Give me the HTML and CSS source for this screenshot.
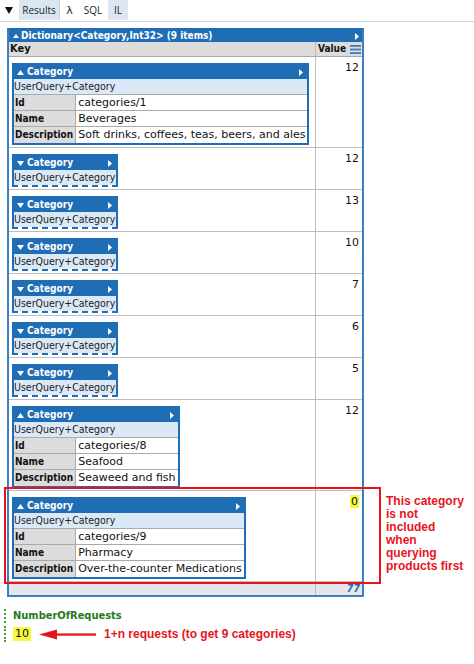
FILE: index.html
```html
<!DOCTYPE html>
<html>
<head>
<meta charset="utf-8">
<link rel="stylesheet" href="styles.css">
</head>
<body>
<div class="page">
  <div class="toolbar">
    <span class="drop"><svg width="8" height="7" viewBox="0 0 8 7"><path d="M0 0H8L4 7Z" fill="#111"/></svg></span>
    <span class="tab tab-results">Results</span>
    <span class="tab tab-lambda">λ</span>
    <span class="tab tab-sql">SQL</span>
    <span class="tab tab-il">IL</span>
  </div>
  <div class="main">
    <table class="dict">
      <colgroup><col class="ck"><col class="cv"></colgroup>
      <thead>
        <tr><th colspan="2" class="title"><div class="bar"><span class="cap"><svg width="6" height="4" viewBox="0 0 6 4"><path d="M0 4L3 0L6 4Z" fill="#fff"/></svg>Dictionary&lt;Category,Int32&gt; (9 items)</span><svg width="4" height="7" viewBox="0 0 4 7"><path d="M0 0L4 3.5L0 7Z" fill="#fff"/></svg></div></th></tr>
        <tr><th class="colh kh">Key</th><th class="colh vh"><div class="vhw"><span>Value</span><svg width="11" height="9" viewBox="0 0 11 9"><rect x="0" y="0" width="11" height="1.8" fill="#3b7fc2"/><rect x="0" y="3.6" width="11" height="1.8" fill="#3b7fc2"/><rect x="0" y="7.2" width="11" height="1.8" fill="#3b7fc2"/></svg></div></th></tr>
      </thead>
      <tbody>
        <tr>
          <td class="kc">
            <table class="obj">
              <tr><th colspan="2" class="hd"><div class="hdw"><span class="hdl"><svg width="7" height="5" viewBox="0 0 7 5"><path d="M0 5L3.5 0L7 5Z" fill="#fff"/></svg>Category</span><svg width="4" height="7" viewBox="0 0 4 7"><path d="M0 0L4 3.5L0 7Z" fill="#fff"/></svg></div></th></tr>
              <tr><td colspan="2" class="type">UserQuery+Category</td></tr>
              <tr><td class="lbl">Id</td><td class="val">categories/1</td></tr>
              <tr><td class="lbl">Name</td><td class="val">Beverages</td></tr>
              <tr class="tall"><td class="lbl">Description</td><td class="val">Soft drinks, coffees, teas, beers, and ales</td></tr>
            </table>
          </td>
          <td class="vc">12</td>
        </tr>
        <tr>
          <td class="kc">
            <table class="obj col">
              <tr><th class="hd"><div class="hdw"><span class="hdl"><svg width="7" height="5" viewBox="0 0 7 5"><path d="M0 0L3.5 5L7 0Z" fill="#fff"/></svg>Category</span><svg width="4" height="7" viewBox="0 0 4 7"><path d="M0 0L4 3.5L0 7Z" fill="#fff"/></svg></div></th></tr>
              <tr><td class="type">UserQuery+Category</td></tr>
            </table>
          </td>
          <td class="vc">12</td>
        </tr>
        <tr>
          <td class="kc">
            <table class="obj col">
              <tr><th class="hd"><div class="hdw"><span class="hdl"><svg width="7" height="5" viewBox="0 0 7 5"><path d="M0 0L3.5 5L7 0Z" fill="#fff"/></svg>Category</span><svg width="4" height="7" viewBox="0 0 4 7"><path d="M0 0L4 3.5L0 7Z" fill="#fff"/></svg></div></th></tr>
              <tr><td class="type">UserQuery+Category</td></tr>
            </table>
          </td>
          <td class="vc">13</td>
        </tr>
        <tr>
          <td class="kc">
            <table class="obj col">
              <tr><th class="hd"><div class="hdw"><span class="hdl"><svg width="7" height="5" viewBox="0 0 7 5"><path d="M0 0L3.5 5L7 0Z" fill="#fff"/></svg>Category</span><svg width="4" height="7" viewBox="0 0 4 7"><path d="M0 0L4 3.5L0 7Z" fill="#fff"/></svg></div></th></tr>
              <tr><td class="type">UserQuery+Category</td></tr>
            </table>
          </td>
          <td class="vc">10</td>
        </tr>
        <tr>
          <td class="kc">
            <table class="obj col">
              <tr><th class="hd"><div class="hdw"><span class="hdl"><svg width="7" height="5" viewBox="0 0 7 5"><path d="M0 0L3.5 5L7 0Z" fill="#fff"/></svg>Category</span><svg width="4" height="7" viewBox="0 0 4 7"><path d="M0 0L4 3.5L0 7Z" fill="#fff"/></svg></div></th></tr>
              <tr><td class="type">UserQuery+Category</td></tr>
            </table>
          </td>
          <td class="vc">7</td>
        </tr>
        <tr>
          <td class="kc">
            <table class="obj col">
              <tr><th class="hd"><div class="hdw"><span class="hdl"><svg width="7" height="5" viewBox="0 0 7 5"><path d="M0 0L3.5 5L7 0Z" fill="#fff"/></svg>Category</span><svg width="4" height="7" viewBox="0 0 4 7"><path d="M0 0L4 3.5L0 7Z" fill="#fff"/></svg></div></th></tr>
              <tr><td class="type">UserQuery+Category</td></tr>
            </table>
          </td>
          <td class="vc">6</td>
        </tr>
        <tr>
          <td class="kc">
            <table class="obj col">
              <tr><th class="hd"><div class="hdw"><span class="hdl"><svg width="7" height="5" viewBox="0 0 7 5"><path d="M0 0L3.5 5L7 0Z" fill="#fff"/></svg>Category</span><svg width="4" height="7" viewBox="0 0 4 7"><path d="M0 0L4 3.5L0 7Z" fill="#fff"/></svg></div></th></tr>
              <tr><td class="type">UserQuery+Category</td></tr>
            </table>
          </td>
          <td class="vc">5</td>
        </tr>
        <tr>
          <td class="kc">
            <table class="obj">
              <tr><th colspan="2" class="hd"><div class="hdw"><span class="hdl"><svg width="7" height="5" viewBox="0 0 7 5"><path d="M0 5L3.5 0L7 5Z" fill="#fff"/></svg>Category</span><svg width="4" height="7" viewBox="0 0 4 7"><path d="M0 0L4 3.5L0 7Z" fill="#fff"/></svg></div></th></tr>
              <tr><td colspan="2" class="type">UserQuery+Category</td></tr>
              <tr><td class="lbl">Id</td><td class="val">categories/8</td></tr>
              <tr><td class="lbl">Name</td><td class="val">Seafood</td></tr>
              <tr class="tall"><td class="lbl">Description</td><td class="val">Seaweed and fish</td></tr>
            </table>
          </td>
          <td class="vc">12</td>
        </tr>
        <tr>
          <td class="kc">
            <table class="obj">
              <tr><th colspan="2" class="hd"><div class="hdw"><span class="hdl"><svg width="7" height="5" viewBox="0 0 7 5"><path d="M0 5L3.5 0L7 5Z" fill="#fff"/></svg>Category</span><svg width="4" height="7" viewBox="0 0 4 7"><path d="M0 0L4 3.5L0 7Z" fill="#fff"/></svg></div></th></tr>
              <tr><td colspan="2" class="type">UserQuery+Category</td></tr>
              <tr><td class="lbl">Id</td><td class="val">categories/9</td></tr>
              <tr><td class="lbl">Name</td><td class="val">Pharmacy</td></tr>
              <tr class="tall"><td class="lbl">Description</td><td class="val">Over-the-counter Medications</td></tr>
            </table>
          </td>
          <td class="vc"><span class="hl">0</span></td>
        </tr>
      </tbody>
      <tfoot>
        <tr><td class="fk"></td><td class="fv">77</td></tr>
      </tfoot>
    </table>
  </div>

  <div class="dump">
    <div class="dline dlabel">NumberOfRequests</div>
    <div class="dline drow">
      <span class="num10">10</span>
      <svg class="arrow" width="57" height="11" viewBox="0 0 57 11"><path d="M0 5.5L18 0.5V10.5Z" fill="#e8141c"/><rect x="16" y="4.4" width="41" height="2.3" fill="#e8141c"/></svg>
      <span class="note2">1+n requests (to get 9 categories)</span>
    </div>
  </div>

  <div class="redbox"></div>
  <div class="rednote">This category<br>is not<br>included<br>when<br>querying<br>products first</div>
</div>
</body>
</html>
```

FILE: styles.css
```css
* { box-sizing: border-box; }
html, body { margin: 0; padding: 0; background: #fff; }
body { font-family: "DejaVu Sans", sans-serif; font-size: 11px; color: #111; }

.page { position: relative; width: 474px; height: 664px; overflow: hidden; }

/* toolbar */
.toolbar {
  display: flex;
  align-items: flex-start;
  height: 22px;
  border-bottom: 1px solid #d4d4d4;
  padding-left: 5px;
  font-family: "Open Sans", sans-serif;
  font-size: 10px;
  color: #1e1e1e;
}
.drop { width: 14px; height: 20px; display: flex; align-items: center; }
.tab { height: 20px; display: flex; align-items: center; justify-content: center; }
.tab-results { width: 41px; background: #dbe6f3; border-right: 1px solid #c4d3e6; }
.tab-lambda { width: 19px; font-family: "DejaVu Sans", sans-serif; font-size: 11px; }
.tab-sql { width: 28px; }
.tab-il { width: 20px; margin-left: 1px; background: #dde7f3; }

.main { padding: 6px 0 0 7px; }

/* outer dictionary table */
.dict {
  border-collapse: separate;
  border-spacing: 0;
  table-layout: fixed;
  width: 357px;
  border: 2px solid #3c80c1;
  border-top-color: #1f6eb5;
}
.ck { width: 307px; }
.cv { width: 46px; }

.title {
  background: #1f6eb5;
  color: #fff;
  padding: 0 3px 0 4px;
  font: bold 10px/12px "DejaVu Sans Condensed", "DejaVu Sans", sans-serif;
  text-align: left;
}
.bar { display: flex; justify-content: space-between; align-items: center; }
.cap { display: flex; align-items: center; gap: 2px; white-space: nowrap; }

.colh {
  background: #dcdcdc;
  font: bold 10px/14px "DejaVu Sans Condensed", "DejaVu Sans", sans-serif;
  text-align: left;
  padding: 0 1px 0 2px;
  border-bottom: 1px solid #a9a9a9;
}
.kh { border-right: 1px solid #bdbdbd; font-size: 11px; padding-left: 1px; }
.vhw { display: flex; align-items: center; justify-content: space-between; }

.kc {
  padding: 6px 3px 2px 3px;
  vertical-align: top;
  border-right: 1px solid #bdbdbd;
  border-bottom: 1px solid #bdbdbd;
}
.vc {
  padding: 4px 3px 0 0;
  vertical-align: top;
  text-align: right;
  border-bottom: 1px solid #bdbdbd;
  font: 11px/13px "DejaVu Sans", sans-serif;
}
.hl { background: #f8f83a; padding: 0 1px; }

.fk { background: #e5e5ec; border-right: 1px solid #bdbdbd; height: 13px; padding: 0; }
.fv {
  background: #e5e5ec;
  text-align: right;
  padding: 0 2px 0 0;
  font: italic bold 10.5px/13px "DejaVu Sans Condensed", "DejaVu Sans", sans-serif;
  color: #2b67ad;
}

/* nested object tables */
.obj {
  border-collapse: separate;
  border-spacing: 0;
  border: 2px solid #1f6eb5;
}
.col { border-bottom: 2px dashed #1f6eb5; }
.hd {
  background: #1f6eb5;
  color: #fff;
  font: bold 10px/14px "DejaVu Sans Condensed", "DejaVu Sans", sans-serif;
  padding: 0 4px 0 3px;
  text-align: left;
}
.hdw { display: flex; justify-content: space-between; align-items: center; }
.hdl { display: flex; align-items: center; gap: 3px; }
.type {
  background: #dbe9f7;
  font: 10.5px/15px "DejaVu Sans Condensed", "DejaVu Sans", sans-serif;
  color: #222;
  padding: 0 1px 0 0;
  white-space: nowrap;
}
.lbl {
  background: #dcdcdc;
  font: bold 10px/15px "DejaVu Sans Condensed", "DejaVu Sans", sans-serif;
  border-top: 1px solid #aaa;
  border-right: 1px solid #aaa;
  padding: 0 2px 0 1px;
  white-space: nowrap;
}
.val {
  font: 11px/15px "DejaVu Sans", sans-serif;
  border-top: 1px solid #aaa;
  padding: 0 2px;
  white-space: nowrap;
}
.tall .lbl, .tall .val { line-height: 16px; }

/* dump of NumberOfRequests */
.dump { margin: 12px 0 0 4px; }
.dline { border-left: 2px dotted #3c9a3c; padding-left: 7px; }
.dlabel { font: bold 11px/14px "DejaVu Sans Condensed", "DejaVu Sans", sans-serif; color: #1f7a1f; }
.drow { display: flex; align-items: center; height: 16px; margin-top: 3px; }
.num10 { font: 11px/14px "DejaVu Sans", sans-serif; padding: 0 2px; background: #f8f83a; }
.arrow { margin-left: 8px; }
.note2 { margin-left: 8px; font: bold 12px/14px "Liberation Sans", Arial, sans-serif; color: #e8141c; }

/* annotation */
.redbox {
  position: absolute;
  left: 4px;
  top: 487px;
  width: 377px;
  height: 97px;
  border: 2px solid #e8141c;
}
.rednote {
  position: absolute;
  left: 386px;
  top: 495px;
  font: bold 12px/13px "Liberation Sans", Arial, sans-serif;
  color: #e8141c;
}
```
